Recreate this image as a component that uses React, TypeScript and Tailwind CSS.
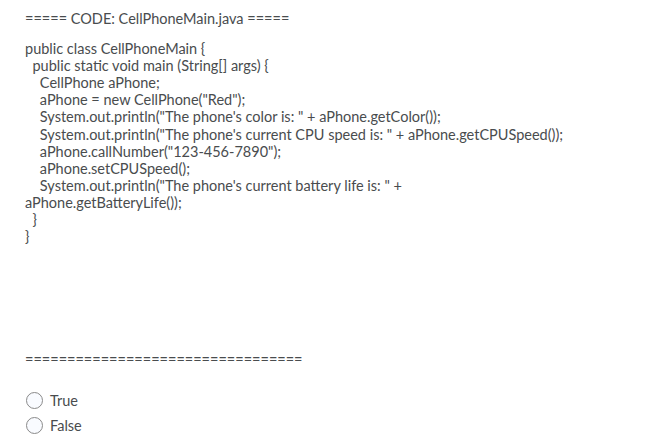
const lines = [
  "public class CellPhoneMain {",
  "  public static void main (String[] args) {",
  "    CellPhone aPhone;",
  "    aPhone = new CellPhone(\"Red\");",
  "    System.out.println(\"The phone's color is: \" + aPhone.getColor());",
  "    System.out.println(\"The phone's current CPU speed is: \" + aPhone.getCPUSpeed());",
  "    aPhone.callNumber(\"123-456-7890\");",
  "    aPhone.setCPUSpeed();",
  "    System.out.println(\"The phone's current battery life is: \" +",
  "aPhone.getBatteryLife());",
  "  }",
  "}",
];

function Radio({ label }: { label: string }) {
  return (
    <label className="flex items-center gap-[7px] h-[25px]">
      <span className="w-[17px] h-[17px] rounded-full border border-[#8a8a8a] bg-[#f9fbff]" />
      <span>{label}</span>
    </label>
  );
}

export default function App() {
  return (
    <div
      className="w-[654px] h-[448px] bg-white text-[14.5px] leading-[17.1px] text-[#494c4e] pl-[25px] pt-[10px]"
      style={{ fontFamily: "Lato, 'Noto Sans', sans-serif" }}
    >
      <p className="whitespace-pre">===== CODE: CellPhoneMain.java =====</p>
      <div className="mt-[13px] whitespace-pre">
        {lines.map((l, i) => (
          <div key={i}>{l}</div>
        ))}
      </div>
      <p className="mt-[106px] whitespace-pre">=================================</p>
      <div className="mt-[20px] pl-[1px]">
        <Radio label="True" />
        <Radio label="False" />
      </div>
    </div>
  );
}
